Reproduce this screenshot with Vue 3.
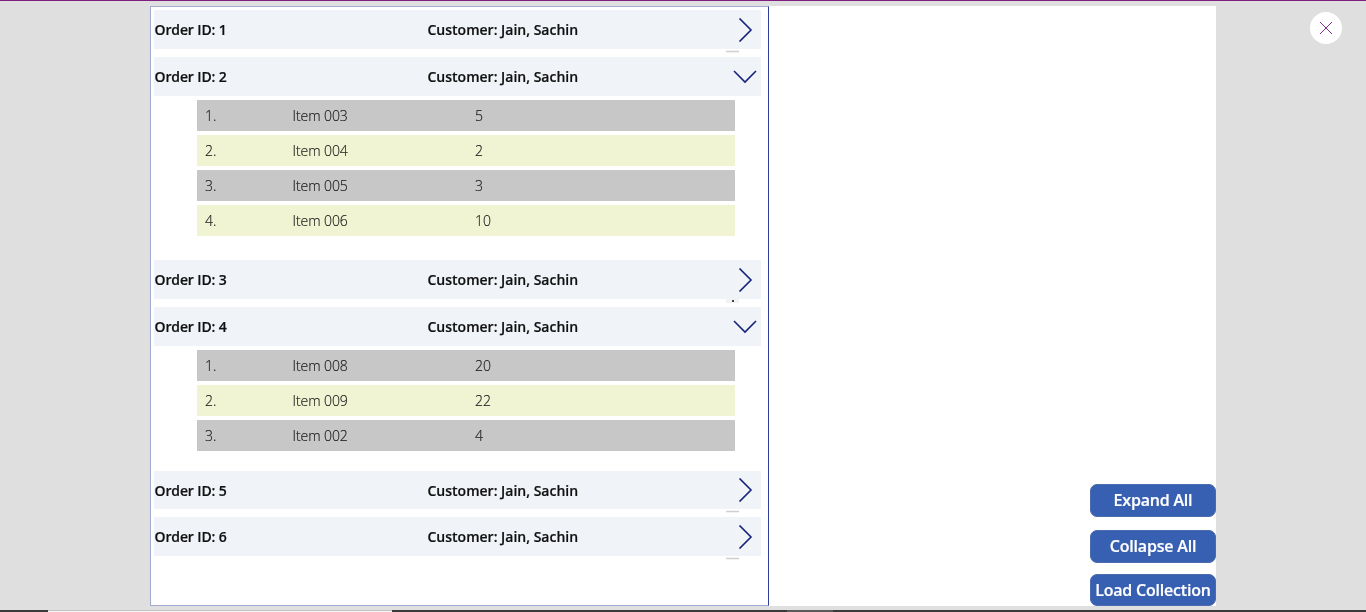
<script setup>
const orders = [
  { id: 1, items: [], mark: 'dash' },
  { id: 2, items: [['1.', 'Item 003', 5], ['2.', 'Item 004', 2], ['3.', 'Item 005', 3], ['4.', 'Item 006', 10]], tail: 'wide' },
  { id: 3, items: [], mark: 'dot' },
  { id: 4, items: [['1.', 'Item 008', 20], ['2.', 'Item 009', 22], ['3.', 'Item 002', 4]], tail: 'narrow' },
  { id: 5, items: [], mark: 'dash', short: true },
  { id: 6, items: [], mark: 'dash' }
]
</script>

<template>
  <div class="page">
    <div class="topline"></div>
    <div class="canvas">
      <div class="gallery">
        <div v-for="o in orders" :key="o.id" class="order" :class="{ short: o.short }">
          <div class="head">
            <span class="oid">Order ID: {{ o.id }}</span>
            <span class="cust">Customer: Jain, Sachin</span>
            <svg v-if="o.items.length" class="chev" width="24" height="14" viewBox="0 0 24 14">
              <path d="M1 1 L12 12 L23 1" fill="none" stroke="#14247a" stroke-width="1.6" />
            </svg>
            <svg v-else class="chev" width="24" height="24" viewBox="0 0 24 24">
              <path d="M6.5 0.5 L18 12 L6.5 23.5" fill="none" stroke="#14247a" stroke-width="1.6" />
            </svg>
          </div>
          <div v-if="o.items.length" class="subs" :class="o.tail">
            <div v-for="it in o.items" :key="it[0]" class="sub">
              <span class="c1">{{ it[0] }}</span>
              <span class="c2">{{ it[1] }}</span>
              <span class="c3">{{ it[2] }}</span>
            </div>
          </div>
          <div v-else class="markrow">
            <span class="mark" :class="o.mark"></span>
          </div>
        </div>
      </div>
      <div class="side">
        <button class="btn">Expand All</button>
        <button class="btn">Collapse All</button>
        <button class="btn last">Load Collection</button>
      </div>
    </div>
    <div class="close">
      <svg width="14" height="14" viewBox="0 0 14 14">
        <path d="M1 1 L13 13 M13 1 L1 13" stroke="#8a2a8e" stroke-width="1" fill="none" />
      </svg>
    </div>
    <div class="taskbar">
      <span class="tb dark w48"></span>
      <span class="tb light w344"></span>
      <span class="tb dark w395"></span>
      <span class="tb mid w46"></span>
      <span class="tb dark grow"></span>
    </div>
  </div>
</template>

<style>
html, body { margin: 0; background: #dfdfdf; overflow: hidden; }
</style>

<style scoped>
.page {
  position: relative;
  width: 1366px;
  height: 612px;
  background: #dfdfdf;
  font-family: "Open Sans", "Noto Sans", sans-serif;
  display: flex;
  flex-direction: column;
  overflow: hidden;
}
.topline { height: 1px; background: #7f1f80; margin-bottom: 5px; flex: none; }
.canvas {
  flex: none;
  width: 1066px;
  height: 600px;
  margin-left: 150px;
  background: #fff;
  display: flex;
  justify-content: space-between;
}
.gallery {
  box-sizing: border-box;
  width: 619px;
  height: 600px;
  border-left: 1px solid #a4abd3;
  border-top: 1px solid #a4abd3;
  border-bottom: 1px solid #a4abd3;
  border-right: 1px solid #2e3f9c;
  padding: 3px 7px 0 3px;
  will-change: opacity;
}
.head {
  position: relative;
  height: 39px;
  box-sizing: border-box;
  background: #f0f3f8;
  display: flex;
  align-items: center;
  font-size: 14px;
  font-weight: 600;
  color: #111;
  -webkit-text-stroke: 0.2px #111;
  padding-left: 0.5px;
}
.short .head { height: 38px; padding-top: 1px; }
.oid { width: 273px; letter-spacing: -0.12px; }
.chev { position: absolute; left: 578.5px; top: 50%; transform: translateY(-50%); }
.markrow { height: 8px; position: relative; }
.mark {
  position: absolute;
  left: 572px;
  top: 1px;
  width: 13px;
  height: 3px;
  background: #f2f2f2;
}
.mark.dash::after {
  content: "";
  position: absolute;
  left: 0;
  right: 0;
  top: 1px;
  height: 1px;
  background: #d0d0d0;
}
.mark.dot { top: 0; height: 4px; }
.mark.dot::after {
  content: "";
  position: absolute;
  left: 6px;
  top: 1px;
  width: 2px;
  height: 2px;
  background: #444;
}
.subs {
  display: flex;
  flex-direction: column;
  gap: 4px;
  padding: 4px 26px 0 43px;
}
.subs.wide { padding-bottom: 24px; }
.subs.narrow { padding-bottom: 20px; }
.sub {
  height: 31px;
  display: flex;
  align-items: center;
  font-size: 14px;
  font-weight: 300;
  color: #1a1a1a;
  -webkit-text-stroke: 0.15px #1a1a1a;
  background: #c7c7c7;
}
.sub:nth-child(even) { background: #f1f4d2; }
.c1 { width: 87.5px; padding-left: 8px; box-sizing: content-box; }
.c2 { width: 182.5px; letter-spacing: -0.08px; }
.side {
  width: 126px;
  display: flex;
  flex-direction: column;
  justify-content: flex-end;
  gap: 13px;
  will-change: opacity;
}
.btn {
  box-sizing: border-box;
  width: 126px;
  height: 33px;
  border: 1px solid #4a6bad;
  border-radius: 7px;
  background: #3860b2;
  color: #fff;
  font-family: inherit;
  font-size: 16px;
  font-weight: 600;
  -webkit-text-stroke: 0.2px #fff;
  padding: 0 0 2px;
  white-space: nowrap;
  letter-spacing: -0.2px;
}
.btn.last { margin-top: -2px; height: 32px; padding: 0; }
.close {
  position: absolute;
  left: 1310px;
  top: 12px;
  width: 32px;
  height: 32px;
  border-radius: 50%;
  background: #fff;
  display: flex;
  align-items: center;
  justify-content: center;
}
.taskbar {
  position: absolute;
  left: 0;
  right: 0;
  bottom: 0;
  height: 2px;
  display: flex;
}
.tb { display: block; height: 2px; box-sizing: border-box; }
.dark { background: #3a3a3a; }
.mid { background: #5a5a5a; }
.light { background: #f4f4f4; border-top: 1px solid #c4c4c4; }
.w48 { width: 48px; }
.w344 { width: 344px; }
.w395 { width: 395px; }
.w46 { width: 46px; }
.grow { flex: 1; }
</style>
